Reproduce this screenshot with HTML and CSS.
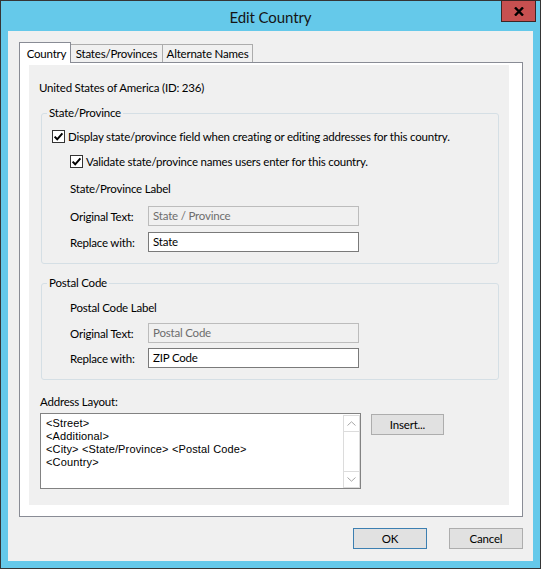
FILE: index.html
```html
<!DOCTYPE html>
<html>
<head>
<meta charset="utf-8">
<title>Edit Country</title>
<link rel="stylesheet" href="styles.css">
</head>
<body>
<div class="window">
  <div class="titlebar">
    <span class="title">Edit Country</span>
    <div class="close" aria-label="Close">
      <svg width="10" height="9" viewBox="0 0 10 9"><path d="M1 0.5 L9 8.5 M9 0.5 L1 8.5" stroke="#000" stroke-width="2.4" fill="none"/></svg>
    </div>
  </div>
  <div class="client">
    <div class="tabs">
      <div class="tab active">Country</div>
      <div class="tab tab-states">States/Provinces</div>
      <div class="tab tab-alt">Alternate Names</div>
    </div>
    <div class="pane">
      <div class="page">
        <div class="country-name">United States of America (ID: 236)</div>

        <fieldset class="group group-state">
          <legend>State/Province</legend>
          <div class="check-row check-1">
            <span class="checkbox"><svg width="11" height="11" viewBox="0 0 11 11"><path d="M1.6 5.6 L4.2 8.3 L9.4 2.4" stroke="#000" stroke-width="2" fill="none"/></svg></span>
            <span>Display state/province field when creating or editing addresses for this country.</span>
          </div>
          <div class="check-row check-2">
            <span class="checkbox"><svg width="11" height="11" viewBox="0 0 11 11"><path d="M1.6 5.6 L4.2 8.3 L9.4 2.4" stroke="#000" stroke-width="2" fill="none"/></svg></span>
            <span>Validate state/province names users enter for this country.</span>
          </div>
          <div class="sub-label label-state">State/Province Label</div>
          <div class="field-row first">
            <span class="field-label">Original Text:</span>
            <div class="input disabled">State / Province</div>
          </div>
          <div class="field-row second">
            <span class="field-label">Replace with:</span>
            <div class="input">State</div>
          </div>
        </fieldset>

        <fieldset class="group group-postal">
          <legend>Postal Code</legend>
          <div class="sub-label label-postal">Postal Code Label</div>
          <div class="field-row first-postal">
            <span class="field-label">Original Text:</span>
            <div class="input disabled">Postal Code</div>
          </div>
          <div class="field-row second-postal">
            <span class="field-label">Replace with:</span>
            <div class="input">ZIP Code</div>
          </div>
        </fieldset>

        <div class="address-label">Address Layout:</div>
        <div class="address-row">
          <div class="textarea">
            <div class="textarea-text">
              <div>&lt;Street&gt;</div>
              <div>&lt;Additional&gt;</div>
              <div>&lt;City&gt; &lt;State/Province&gt; &lt;Postal Code&gt;</div>
              <div>&lt;Country&gt;</div>
            </div>
            <div class="scrollbar">
              <div class="sb-btn sb-up"><svg width="9" height="5" viewBox="0 0 9 5"><path d="M0.5 4.5 L4.5 0.8 L8.5 4.5" stroke="#a6a6a6" stroke-width="1" fill="none"/></svg></div>
              <div class="sb-track"></div>
              <div class="sb-btn sb-down"><svg width="9" height="5" viewBox="0 0 9 5"><path d="M0.5 0.5 L4.5 4.2 L8.5 0.5" stroke="#a6a6a6" stroke-width="1" fill="none"/></svg></div>
            </div>
          </div>
          <div class="button insert">Insert...</div>
        </div>
      </div>
    </div>
    <div class="buttons">
      <div class="button default">OK</div>
      <div class="button">Cancel</div>
    </div>
  </div>
</div>
</body>
</html>
```

FILE: styles.css
```css
* {
  box-sizing: border-box;
}

html, body {
  margin: 0;
  padding: 0;
}

body {
  width: 541px;
  height: 569px;
  font-family: Lato, "Open Sans", sans-serif;
  font-size: 11.5px;
  letter-spacing: -0.2px;
  color: #000;
  background: #65c9ea;
}

.window {
  position: relative;
  width: 541px;
  height: 569px;
  border: 1px solid #353535;
  background: #65c9ea;
  padding: 0 7px 7px 7px;
  display: flex;
  flex-direction: column;
}

.titlebar {
  height: 30px;
  display: flex;
  align-items: center;
  justify-content: center;
  flex: none;
}

.title {
  font-size: 15px;
  letter-spacing: -0.1px;
  color: #151515;
  margin-top: 1px;
}

.close {
  position: absolute;
  top: -1px;
  right: 4px;
  width: 35px;
  height: 22px;
  background: #c75050;
  border: 1px solid #3d2525;
  display: flex;
  align-items: center;
  justify-content: center;
}

.client {
  flex: 1;
  background: #f0f0f0;
  padding: 11px 10px 12px 11px;
  display: flex;
  flex-direction: column;
}

.tabs {
  display: flex;
  align-items: flex-end;
  height: 20px;
  flex: none;
  position: relative;
  z-index: 2;
}

.tab {
  height: 18px;
  border: 1px solid #acacac;
  border-bottom: none;
  background: #f0f0f0;
  display: flex;
  align-items: center;
  justify-content: center;
  margin-left: -1px;
  line-height: 16px;
}

.tab.active {
  height: 21px;
  margin-left: 0;
  margin-bottom: -1px;
  width: 52px;
  background: #fff;
  border-color: #898c95;
  padding-left: 3px;
  padding-top: 1px;
  z-index: 3;
}

.tab-states {
  width: 93px;
}

.tab-alt {
  width: 91px;
}

.pane {
  flex: none;
  height: 455px;
  border: 1px solid #898c95;
  background: #fff;
  padding: 2px 13px 11px 9px;
  display: flex;
}

.page {
  flex: 1;
  background: #f0f0f0;
  display: flex;
  flex-direction: column;
}

.country-name {
  line-height: 16px;
  margin-top: 15px;
  padding-left: 10px;
}

.group {
  margin: 9px 10px 0 12px;
  padding: 0;
  border: 1px solid #d5dfe5;
  border-radius: 3px;
  min-width: 0;
}

.group legend {
  margin-left: 5px;
  padding: 0 2px;
  line-height: 16px;
}

.group-state {
  padding-bottom: 11px;
}

.group-postal {
  margin-top: 11px;
  padding-bottom: 11px;
}

.check-row {
  display: flex;
  align-items: center;
  height: 17px;
  line-height: 16px;
}

.check-1 {
  margin-top: 7px;
  margin-left: 10px;
}

.check-2 {
  margin-top: 8px;
  margin-left: 28px;
}

.checkbox {
  width: 13px;
  height: 13px;
  border: 1px solid #333;
  background: #fff;
  display: flex;
  align-items: center;
  justify-content: center;
  margin-right: 3px;
  flex: none;
}

.sub-label {
  line-height: 16px;
  margin-left: 28px;
}

.label-state {
  margin-top: 11px;
}

.label-postal {
  margin-top: 9px;
}

.field-row {
  display: flex;
  align-items: center;
  margin-left: 28px;
  height: 20px;
}

.field-row.first {
  margin-top: 9px;
}

.field-row.second {
  margin-top: 6px;
}

.field-row.first-postal {
  margin-top: 7px;
}

.field-row.second-postal {
  margin-top: 5px;
}

.field-label {
  width: 78px;
  flex: none;
}

.input {
  width: 211px;
  height: 20px;
  border: 1px solid #7a7a7a;
  background: #fff;
  padding-left: 4px;
  line-height: 18px;
}

.input.disabled {
  border-color: #bcbcbc;
  background: #f0f0f0;
  color: #6d6d6d;
}

.address-label {
  margin-top: 14px;
  padding-left: 11px;
  line-height: 16px;
}

.address-row {
  display: flex;
  align-items: flex-start;
  margin-top: 3px;
  padding-left: 11px;
}

.textarea {
  width: 321px;
  height: 76px;
  border: 1px solid #828282;
  background: #fff;
  display: flex;
}

.textarea-text {
  flex: 1;
  padding: 3px 0 0 5px;
  font-family: "Liberation Sans", Arial, sans-serif;
  font-size: 11px;
  letter-spacing: 0.15px;
  line-height: 13px;
}

.scrollbar {
  width: 17px;
  margin: 1px 0 0 0;
  height: 73px;
  border: 1px solid #dcdcdc;
  display: flex;
  flex-direction: column;
  background: #fff;
}

.sb-btn {
  height: 16px;
  display: flex;
  align-items: center;
  justify-content: center;
  flex: none;
}

.sb-up {
  border-bottom: 1px solid #dcdcdc;
}

.sb-down {
  border-top: 1px solid #dcdcdc;
}

.sb-track {
  flex: 1;
}

.button {
  width: 74px;
  height: 21px;
  border: 1px solid #adadad;
  background: #e1e1e1;
  display: flex;
  align-items: center;
  justify-content: center;
  line-height: 16px;
}

.button.insert {
  width: 73px;
  margin-left: 10px;
  margin-top: 1px;
}

.button.default {
  border-color: #3c7fb1;
}

.buttons {
  display: flex;
  justify-content: flex-end;
  gap: 22px;
  margin-top: 11px;
  flex: none;
}
```
